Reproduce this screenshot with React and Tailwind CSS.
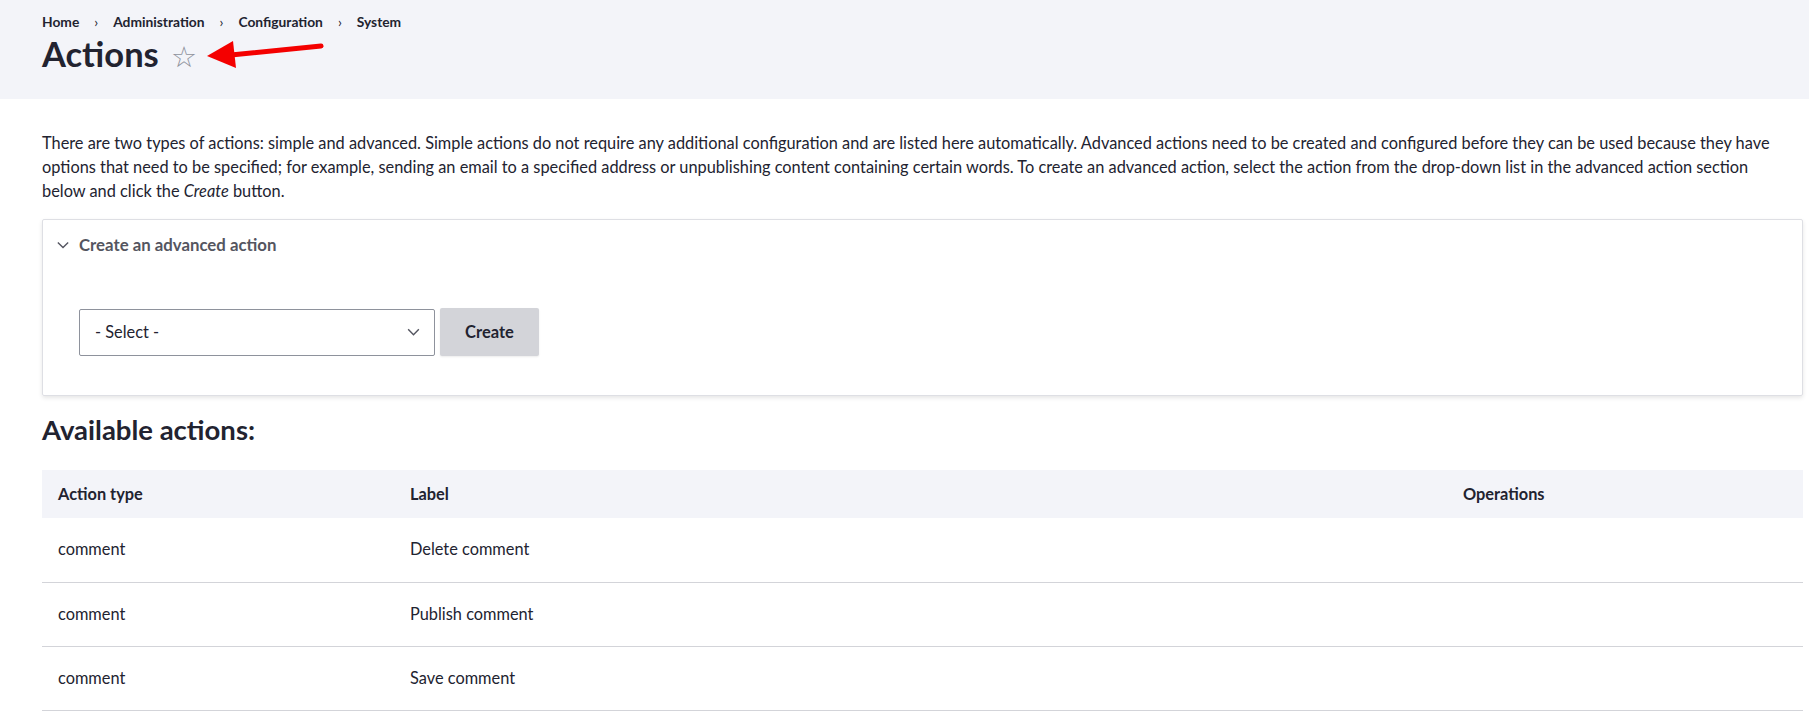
import React from 'react';

const rows = [
  { type: 'comment', label: 'Delete comment' },
  { type: 'comment', label: 'Publish comment' },
  { type: 'comment', label: 'Save comment' },
];

const Chevron = ({ className }) => (
  <svg viewBox="0 0 14 9" className={className} fill="none" stroke="currentColor" strokeWidth="1.6">
    <path d="M1 1.5l6 6 6-6" />
  </svg>
);

export default function App() {
  return (
    <div className="min-h-screen bg-white text-[#222330] font-['Lato','Liberation_Sans',sans-serif]">
      {/* Page header */}
      <div className="bg-[#f3f4f9] px-[42px] pt-[13px] h-[99px]">
        <nav className="flex items-center text-[13.8px] font-bold leading-[18px] text-[#222330]">
          <span>Home</span>
          <span className="mx-[15px] font-normal">›</span>
          <span>Administration</span>
          <span className="mx-[15px] font-normal">›</span>
          <span>Configuration</span>
          <span className="mx-[15px] font-normal">›</span>
          <span>System</span>
        </nav>
        <div className="flex items-center mt-[3px]">
          <h1 className="text-[34.5px] font-bold leading-[40px]">Actions</h1>
          <span className="ml-[12px] text-[29px] leading-none text-[#8e929c] mt-[2px]">☆</span>
          <svg width="120" height="32" viewBox="0 0 120 32" className="ml-[8px] mt-[2px]">
            <path d="M26 16 L116 7" stroke="#f40000" strokeWidth="5" strokeLinecap="round" />
            <path d="M2 17 L28 2 L31 29 Z" fill="#f40000" />
          </svg>
        </div>
      </div>

      <div className="px-[42px] pr-[6px]">
        <p className="mt-[32px] text-[16.35px] leading-[24px]">
          There are two types of actions: simple and advanced. Simple actions do not require any additional configuration and are listed here automatically. Advanced actions need to be created and configured before they can be used because they have<br />
          options that need to be specified; for example, sending an email to a specified address or unpublishing content containing certain words. To create an advanced action, select the action from the drop-down list in the advanced action section<br />
          below and click the <em>Create</em> button.
        </p>

        {/* Details box */}
        <div className="mt-[16px] border border-[#dedfe4] rounded-[2px] shadow-[0_2px_4px_rgba(0,0,0,0.1)] h-[177px]">
          <div className="flex items-center h-[50px] pl-[14px] text-[#545560]">
            <Chevron className="w-[12px] h-[8px]" />
            <span className="ml-[10px] text-[16.8px] font-bold">Create an advanced action</span>
          </div>
          <div className="flex items-center gap-[5px] mt-[38px] pl-[36px]">
            <div className="flex items-center justify-between w-[356px] h-[47px] border border-[#8e929c] rounded-[2px] pl-[15px] pr-[14px] bg-white">
              <span className="text-[16.35px]">- Select -</span>
              <Chevron className="w-[13px] h-[8px] text-[#545560]" />
            </div>
            <button className="w-[99px] h-[48px] bg-[#d3d4d9] rounded-[2px] text-[16.5px] font-bold text-[#222330] shadow-[0_1px_2px_rgba(0,0,0,0.08)]">
              Create
            </button>
          </div>
        </div>

        <h2 className="mt-[17px] text-[27.5px] font-bold leading-[34px]">Available actions:</h2>

        <table className="mt-[23px] w-full table-fixed border-collapse text-[16.35px]">
          <colgroup>
            <col className="w-[352px]" />
            <col className="w-[1053px]" />
            <col />
          </colgroup>
          <thead>
            <tr className="bg-[#f3f4f9] h-[48px]">
              <th className="text-left font-bold px-[16px]">Action type</th>
              <th className="text-left font-bold px-[16px]">Label</th>
              <th className="text-left font-bold px-[16px]">Operations</th>
            </tr>
          </thead>
          <tbody>
            {rows.map((r) => (
              <tr key={r.label} className="h-[64px] border-b border-[#d3d4d9]">
                <td className="px-[16px]">{r.type}</td>
                <td className="px-[16px]">{r.label}</td>
                <td className="px-[16px]"></td>
              </tr>
            ))}
          </tbody>
        </table>
      </div>
    </div>
  );
}
